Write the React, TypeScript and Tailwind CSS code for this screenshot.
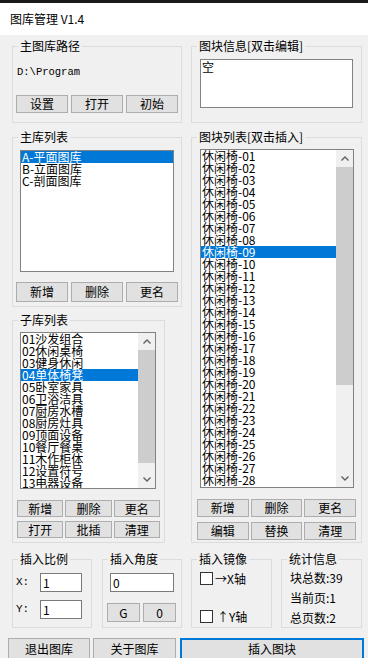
import React from "react";

const subItems = [
  "01沙发组合",
  "02休闲桌椅",
  "03健身休闲",
  "04单体椅凳",
  "05卧室家具",
  "06卫浴洁具",
  "07厨房水槽",
  "08厨房灶具",
  "09顶面设备",
  "10餐厅餐桌",
  "11木作柜体",
  "12设置符号",
  "13电器设备",
];

const blockItems = Array.from({ length: 28 }, (_, i) =>
  `休闲椅-${String(i + 1).padStart(2, "0")}`
);

function Group({
  title,
  className,
  children,
}: {
  title: string;
  className: string;
  children?: React.ReactNode;
}) {
  return (
    <fieldset className={`border border-[#dcdcdc] ${className}`}>
      <legend className="ml-[5px] px-[2px] text-[12px] leading-[14px]">{title}</legend>
      {children}
    </fieldset>
  );
}

function Btn({ label, className = "" }: { label: string; className?: string }) {
  return (
    <button
      type="button"
      className={`flex items-center justify-center border border-[#adadad] bg-[#e1e1e1] text-[12px] leading-none text-black ${className}`}
    >
      {label}
    </button>
  );
}

function Chevron({ up }: { up?: boolean }) {
  return (
    <svg width="8" height="5" viewBox="0 0 8 5" className={up ? "" : "rotate-180"}>
      <path d="M0.5 4.5 L4 1 L7.5 4.5" fill="none" stroke="#606060" strokeWidth="1.4" />
    </svg>
  );
}

function ScrollBar({ thumb, track }: { thumb: string; track: string }) {
  return (
    <div className="flex w-[17px] shrink-0 flex-col bg-[#f0f0f0]">
      <div className="flex h-[17px] items-center justify-center">
        <Chevron up />
      </div>
      <div className={`bg-[#cdcdcd] ${thumb}`} />
      <div className={track} />
      <div className="flex h-[17px] items-center justify-center">
        <Chevron />
      </div>
    </div>
  );
}

function ListBox({
  items,
  selected,
  className,
  scroll,
}: {
  items: string[];
  selected: number;
  className: string;
  scroll?: React.ReactNode;
}) {
  return (
    <div className={`flex overflow-hidden border border-[#828282] bg-white ${className}`}>
      <div className="min-w-0 flex-1 overflow-hidden">
        {items.map((t, i) => (
          <div
            key={t}
            className={`h-[12px] whitespace-nowrap pl-[1px] text-[12px] leading-[12px] ${
              i === selected ? "bg-[#0078d7] text-white" : "text-black"
            }`}
          >
            {t}
          </div>
        ))}
      </div>
      {scroll}
    </div>
  );
}

export default function App() {
  return (
    <div className="h-[658px] w-[368px] overflow-hidden bg-[#f0f0f0] font-['Noto_Sans_CJK_SC',sans-serif] text-black">
      <div className="h-[3px] bg-[#1a1a1a]" />
      <div className="flex h-[32px] items-center bg-white pl-[10px] text-[12px]">图库管理 V1.4</div>

      <div className="pt-[4px]">
        {/* top row */}
        <div className="flex gap-[9px] pl-[12px]">
          <Group title="主图库路径" className="h-[84px] w-[170px]">
            <div className="px-[3px] pt-[13px]">
              <div className="ml-[1px] h-[12px] font-['Liberation_Mono',monospace] text-[10.5px] leading-[12px]">
                D:\Program
              </div>
              <div className="mt-[17px] grid grid-cols-3 gap-[3px]">
                <Btn label="设置" className="h-[18px]" />
                <Btn label="打开" className="h-[18px]" />
                <Btn label="初始" className="h-[18px]" />
              </div>
            </div>
          </Group>
          <Group title="图块信息[双击编辑]" className="h-[84px] w-[171px]">
            <div className="px-[8px] pt-[6px]">
              <div className="h-[49px] border border-[#828282] bg-white pl-[1px] pt-[1px] text-[12px] leading-[12px]">
                空
              </div>
            </div>
          </Group>
        </div>

        {/* middle row */}
        <div className="mt-[7px] flex gap-[9px] pl-[12px]">
          <div className="flex w-[170px] flex-col gap-[6px]">
            <Group title="主库列表" className="h-[177px] w-[170px]">
              <div className="px-[3px] pt-[6px]">
                <ListBox
                  items={["A-平面图库", "B-立面图库", "C-剖面图库"]}
                  selected={0}
                  className="mx-[4px] h-[122px]"
                />
                <div className="mt-[10px] grid grid-cols-3 gap-[3px]">
                  <Btn label="新增" className="h-[20px]" />
                  <Btn label="删除" className="h-[20px]" />
                  <Btn label="更名" className="h-[20px]" />
                </div>
              </div>
            </Group>
            <Group title="子库列表" className="h-[230px] w-[153px]">
              <div className="px-[4px] pt-[5px]">
                <ListBox
                  items={subItems}
                  selected={3}
                  className="ml-[3px] h-[157px] w-[136px]"
                  scroll={<ScrollBar thumb="h-[113px]" track="h-[8px]" />}
                />
                <div className="mt-[11px] grid grid-cols-3 gap-[2px]">
                  <Btn label="新增" className="h-[17px]" />
                  <Btn label="删除" className="h-[17px]" />
                  <Btn label="更名" className="h-[17px]" />
                </div>
                <div className="mt-[4px] grid grid-cols-3 gap-[2px]">
                  <Btn label="打开" className="h-[17px]" />
                  <Btn label="批插" className="h-[17px]" />
                  <Btn label="清理" className="h-[17px]" />
                </div>
              </div>
            </Group>
          </div>
          <Group title="图块列表[双击插入]" className="h-[413px] w-[171px]">
            <div className="px-[5px] pt-[5px]">
              <ListBox
                items={blockItems}
                selected={8}
                className="ml-[3px] mr-[2px] h-[339px]"
                scroll={<ScrollBar thumb="h-[218px]" track="h-[85px]" />}
              />
              <div className="mt-[11px] grid grid-cols-3 gap-[2px]">
                <Btn label="新增" className="h-[18px]" />
                <Btn label="删除" className="h-[18px]" />
                <Btn label="更名" className="h-[18px]" />
              </div>
              <div className="mt-[5px] grid grid-cols-3 gap-[2px]">
                <Btn label="编辑" className="h-[18px]" />
                <Btn label="替换" className="h-[18px]" />
                <Btn label="清理" className="h-[18px]" />
              </div>
            </div>
          </Group>
        </div>

        {/* bottom groups */}
        <div className="mt-[9px] flex pl-[12px]">
          <Group title="插入比例" className="h-[76px] w-[80px]">
            <div className="pl-[3px] pt-[7px]">
              <div className="flex h-[19px] items-center">
                <span className="w-[24px] font-['Liberation_Mono',monospace] text-[11px]">X:</span>
                <div className="flex h-[19px] w-[42px] items-center border border-[#7a7a7a] bg-white pl-[2px] text-[12px]">1</div>
              </div>
              <div className="mt-[8px] flex h-[19px] items-center">
                <span className="w-[24px] font-['Liberation_Mono',monospace] text-[11px]">Y:</span>
                <div className="flex h-[19px] w-[42px] items-center border border-[#7a7a7a] bg-white pl-[2px] text-[12px]">1</div>
              </div>
            </div>
          </Group>
          <Group title="插入角度" className="ml-[10px] h-[76px] w-[80px]">
            <div className="pl-[4px] pt-[7px]">
              <div className="ml-[3px] flex h-[19px] w-[64px] items-center border border-[#7a7a7a] bg-white pl-[2px] text-[12px]">
                0
              </div>
              <div className="mt-[11px] flex gap-[3px]">
                <Btn label="G" className="h-[19px] w-[33px]" />
                <Btn label="0" className="h-[19px] w-[33px]" />
              </div>
            </div>
          </Group>
          <Group title="插入镜像" className="ml-[9px] h-[76px] w-[81px]">
            <div className="pl-[8px] pt-[6px] text-[12px]">
              <div className="flex h-[13px] items-center">
                <div className="h-[13px] w-[13px] border border-[#333333] bg-white" />
                <span className="ml-[2px] leading-[13px]">→X轴</span>
              </div>
              <div className="mt-[25px] flex h-[13px] items-center">
                <div className="h-[13px] w-[13px] border border-[#333333] bg-white" />
                <span className="ml-[4px] leading-[13px]">↑Y轴</span>
              </div>
            </div>
          </Group>
          <Group title="统计信息" className="ml-[9px] h-[76px] w-[81px]">
            <div className="pl-[8px] pt-[2px] text-[12px] leading-[20px]">
              <div>块总数:39</div>
              <div>当前页:1</div>
              <div>总页数:2</div>
            </div>
          </Group>
        </div>

        {/* bottom buttons */}
        <div className="mt-[10px] flex pl-[8px]">
          <Btn label="退出图库" className="h-[22px] w-[82px]" />
          <Btn label="关于图库" className="ml-[3px] h-[22px] w-[83px]" />
          <button
            type="button"
            className="ml-[4px] flex h-[22px] w-[184px] items-center justify-center border-2 border-[#0078d7] bg-[#e1e1e1] text-[12px] leading-none"
          >
            插入图块
          </button>
        </div>
      </div>
    </div>
  );
}
